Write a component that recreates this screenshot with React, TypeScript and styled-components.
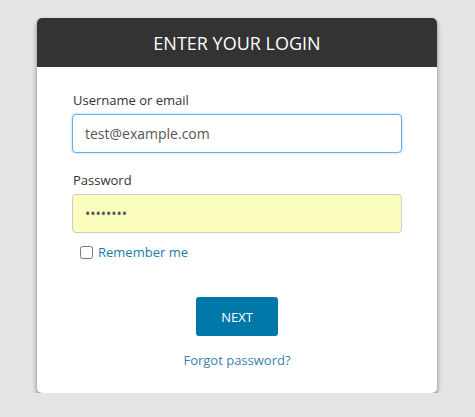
import styled, { createGlobalStyle } from "styled-components";

const Global = createGlobalStyle`
  html, body {
    margin: 0;
    padding: 0;
    background: #e5e5e5;
    font-family: "Open Sans", "Noto Sans", sans-serif;
  }
`;

export default function App() {
  return (
    <>
      <Global />
      <Page>
        <Card>
          <Header>ENTER YOUR LOGIN</Header>
          <Body>
            <Field $space={18}>
              <Label>Username or email</Label>
              <Input type="text" defaultValue="test@example.com" $focused />
            </Field>
            <Field $space={10}>
              <Label>Password</Label>
              <Input type="password" defaultValue="password" $autofill />
            </Field>
            <Remember>
              <input type="checkbox" />
              <span>Remember me</span>
            </Remember>
            <Actions>
              <Button>NEXT</Button>
              <Link href="#">Forgot password?</Link>
            </Actions>
          </Body>
        </Card>
      </Page>
    </>
  );
}

const Page = styled.div`
  display: flex;
  padding: 18px 0 0 37px;
`;

const Card = styled.div`
  width: 400px;
  height: 375px;
  background: #fff;
  border-radius: 5px;
  overflow: hidden;
  box-shadow: 0 3px 5px rgba(0, 0, 0, 0.45);
`;

const Header = styled.div`
  height: 49px;
  background: #333333;
  color: #fff;
  font-size: 18px;
  display: flex;
  align-items: center;
  justify-content: center;
`;

const Body = styled.div`
  padding: 24px 35px 0 35px;
  display: flex;
  flex-direction: column;
`;

const Field = styled.div<{ $space: number }>`
  display: flex;
  flex-direction: column;
  margin-bottom: ${(p) => p.$space}px;
`;

const Label = styled.label`
  font-size: 13px;
  color: #333;
  padding-left: 1px;
  margin-bottom: 5px;
`;

const Input = styled.input<{ $focused?: boolean; $autofill?: boolean }>`
  box-sizing: border-box;
  width: 330px;
  height: 39px;
  padding: 0 12px;
  font-family: inherit;
  font-size: 14px;
  color: #555;
  border-radius: 4px;
  outline: none;
  border: 1px solid ${(p) => (p.$focused ? "#66afe9" : "#cccccc")};
  background: ${(p) => (p.$autofill ? "#fafdbd" : "#fff")};
  box-shadow: ${(p) =>
    p.$focused ? "0 0 3px rgba(102, 175, 233, 0.6)" : "none"};
`;

const Remember = styled.label`
  display: flex;
  align-items: center;
  gap: 5px;
  padding-left: 8px;
  font-size: 13px;
  color: #1a7aad;

  input {
    margin: 0;
    width: 13px;
    height: 13px;
  }
`;

const Actions = styled.div`
  display: flex;
  flex-direction: column;
  align-items: center;
  margin-top: 36px;
`;

const Button = styled.button`
  width: 82px;
  height: 39px;
  border: none;
  border-radius: 3px;
  background: #0077a9;
  color: #fff;
  font-family: inherit;
  font-size: 13px;
`;

const Link = styled.a`
  margin-top: 15px;
  font-size: 13px;
  color: #3a7fb3;
  text-decoration: none;
`;
